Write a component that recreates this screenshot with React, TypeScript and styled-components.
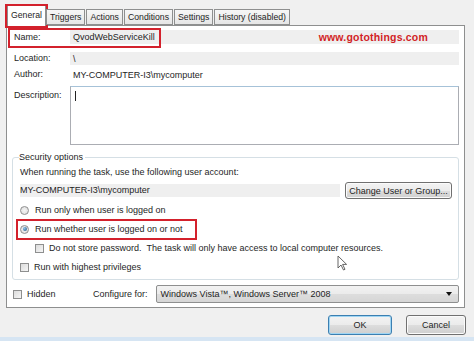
import styled, { createGlobalStyle } from "styled-components";

const GlobalStyle = createGlobalStyle`
  html, body {
    margin: 0;
    padding: 0;
    background: #f0f0f0;
  }
`;

const Window = styled.div`
  position: relative;
  width: 474px;
  height: 341px;
  box-sizing: border-box;
  background: #f0f0f0;
  border-bottom: 4px solid #d6e5f3;
  font-family: "Liberation Sans", Arial, sans-serif;
  font-size: 9px;
  color: #1e1e1e;
  display: flex;
  flex-direction: column;
  overflow: hidden;
`;

const TabBar = styled.div`
  display: flex;
  align-items: flex-end;
  height: 25px;
  padding-left: 7px;
  position: relative;
  z-index: 1;
`;

const Tab = styled.div<{ $active?: boolean }>`
  position: relative;
  box-sizing: border-box;
  height: ${(p) => (p.$active ? "21px" : "16px")};
  margin-bottom: ${(p) => (p.$active ? "-1px" : "0")};
  padding: ${(p) => (p.$active ? "4px 3px 0" : "2px 3px 0")};
  margin-right: ${(p) => (p.$active ? "0" : "1px")};
  border: 1px solid #8e8f8f;
  border-bottom: ${(p) => (p.$active ? "none" : "1px solid #8e8f8f")};
  background: ${(p) =>
    p.$active ? "#ffffff" : "linear-gradient(#f7f7f7, #e6e6e6)"};
  font-size: 8.7px;
  white-space: nowrap;
`;

const Highlight = styled.div<{ $l: number; $t: number; $w: number; $h: number }>`
  position: absolute;
  left: ${(p) => p.$l}px;
  top: ${(p) => p.$t}px;
  width: ${(p) => p.$w}px;
  height: ${(p) => p.$h}px;
  box-sizing: border-box;
  border: 2px solid #d3212c;
  pointer-events: none;
`;

const Panel = styled.div`
  box-sizing: border-box;
  margin-left: 6px;
  width: 459px;
  height: 283px;
  border: 1px solid #8e8f8f;
  background: #ffffff;
  padding: 4px 5px 0 7px;
  display: flex;
  flex-direction: column;
`;

const FieldRow = styled.div<{ $top?: number; $h: number }>`
  position: relative;
  display: grid;
  grid-template-columns: 56px 1fr;
  margin-top: ${(p) => p.$top ?? 0}px;
  height: ${(p) => p.$h}px;
`;

const Label = styled.div<{ $pad?: number }>`
  padding-top: ${(p) => p.$pad ?? 1}px;
  line-height: 12px;
`;

const ReadOnly = styled.div<{ $shade?: boolean }>`
  display: flex;
  align-items: center;
  justify-content: space-between;
  padding: 0 31px 0 3px;
  background: ${(p) => (p.$shade ? "#efefef" : "transparent")};
  line-height: 12px;
`;

const Brand = styled.span`
  color: #d21f26;
  font-weight: bold;
  font-size: 10.5px;
  letter-spacing: 0.2px;
`;

const TextArea = styled.div`
  box-sizing: border-box;
  border: 1px solid #abadb3;
  border-top-color: #a6c2d8;
  background: #fff;
  padding: 4px 4px;
`;

const Caret = styled.div`
  width: 1px;
  height: 10px;
  background: #222;
`;

const Group = styled.fieldset`
  margin: 6px 0 0 -2px;
  padding: 0 6px 6px 7px;
  height: 129px;
  box-sizing: border-box;
  border: 1px solid #d5dfe5;
  border-radius: 3px;
  min-width: 0;
`;

const Legend = styled.legend`
  padding: 0 2px 0 0;
  margin-left: -1px;
  line-height: 12px;
`;

const Line = styled.div<{ $top: number; $indent?: number }>`
  position: relative;
  display: flex;
  align-items: center;
  gap: 5px;
  height: 12px;
  margin-top: ${(p) => p.$top}px;
  margin-left: ${(p) => p.$indent ?? 0}px;
  white-space: nowrap;
`;

const AccountRow = styled.div`
  display: flex;
  align-items: center;
  justify-content: space-between;
  height: 17px;
  margin-top: 4px;
`;

const AccountField = styled.div`
  width: 320px;
  height: 13px;
  background: #efefef;
  line-height: 13px;
`;

const Button = styled.div<{ $w: number; $h: number; $default?: boolean }>`
  box-sizing: border-box;
  width: ${(p) => p.$w}px;
  height: ${(p) => p.$h}px;
  display: flex;
  align-items: center;
  justify-content: center;
  border: 1px solid ${(p) => (p.$default ? "#3c7fb1" : "#707070")};
  border-radius: 3px;
  background: linear-gradient(#f3f3f3 0%, #ebebeb 50%, #dddddd 51%, #cfcfcf 100%);
  box-shadow: inset 0 0 0 1px ${(p) => (p.$default ? "#9fd5f3" : "#fbfbfb")};
  font-size: 9px;
  color: #1e1e1e;
  white-space: nowrap;
`;

const Radio = styled.span<{ $on?: boolean }>`
  box-sizing: border-box;
  width: 9px;
  height: 9px;
  border-radius: 50%;
  border: 1px solid #8e8f8f;
  background: radial-gradient(circle, #f4f4f4 0%, #dcdcdc 100%);
  display: flex;
  align-items: center;
  justify-content: center;
  flex: none;
  margin-right: 1px;
  &::after {
    content: "";
    display: ${(p) => (p.$on ? "block" : "none")};
    width: 4px;
    height: 4px;
    border-radius: 50%;
    background: radial-gradient(circle at 35% 35%, #8fc4ea, #1d4f7e);
  }
`;

const Check = styled.span`
  box-sizing: border-box;
  width: 9px;
  height: 9px;
  border: 1px solid #8e8f8f;
  background: linear-gradient(135deg, #dcdcdc, #f6f6f6);
  flex: none;
`;

const BottomRow = styled.div`
  display: flex;
  align-items: center;
  height: 18px;
  margin: 5px 0 0 -1px;
`;

const HiddenBox = styled.div`
  display: flex;
  align-items: center;
  gap: 5px;
  width: 80px;
`;

const Select = styled.div`
  box-sizing: border-box;
  flex: 1;
  height: 18px;
  margin-left: 8px;
  border: 1px solid #8e8f8f;
  border-radius: 2px;
  background: linear-gradient(#f2f2f2 0%, #ebebeb 50%, #dddddd 51%, #d6d6d6 100%);
  display: flex;
  align-items: center;
  justify-content: space-between;
  padding: 0 6px 0 4px;
`;

const Arrow = styled.span`
  width: 0;
  height: 0;
  border-left: 3px solid transparent;
  border-right: 3px solid transparent;
  border-top: 4px solid #111;
`;

const Footer = styled.div`
  display: flex;
  justify-content: flex-end;
  gap: 14px;
  padding: 7px 8px 0 0;
`;

const Pointer = styled.svg`
  position: absolute;
  left: 337px;
  top: 255px;
`;

export default function App() {
  return (
    <>
      <GlobalStyle />
      <Window>
        <TabBar>
          <Tab $active>
            General
            <Highlight $l={-3} $t={-2} $w={43} $h={24} />
          </Tab>
          <Tab>Triggers</Tab>
          <Tab>Actions</Tab>
          <Tab>Conditions</Tab>
          <Tab>Settings</Tab>
          <Tab>History (disabled)</Tab>
        </TabBar>
        <Panel>
          <FieldRow $h={14}>
            <Label>Name:</Label>
            <ReadOnly $shade>
              <span>QvodWebServiceKill</span>
              <Brand>www.gotothings.com</Brand>
            </ReadOnly>
            <Highlight $l={-6} $t={-2} $w={153} $h={20} />
          </FieldRow>
          <FieldRow $top={8} $h={13}>
            <Label $pad={0}>Location:</Label>
            <ReadOnly $shade>\</ReadOnly>
          </FieldRow>
          <FieldRow $top={3} $h={13}>
            <Label $pad={0}>Author:</Label>
            <ReadOnly>MY-COMPUTER-I3\mycomputer</ReadOnly>
          </FieldRow>
          <FieldRow $top={5} $h={59}>
            <Label $pad={3}>Description:</Label>
            <TextArea>
              <Caret />
            </TextArea>
          </FieldRow>
          <Group>
            <Legend>Security options</Legend>
            <Line $top={3}>When running the task, use the following user account:</Line>
            <AccountRow>
              <AccountField>MY-COMPUTER-I3\mycomputer</AccountField>
              <Button $w={107} $h={17}>Change User or Group...</Button>
            </AccountRow>
            <Line $top={5}>
              <Radio />
              Run only when user is logged on
            </Line>
            <Line $top={7}>
              <Radio $on />
              Run whether user is logged on or not
              <Highlight $l={-4} $t={-4} $w={181} $h={21} />
            </Line>
            <Line $top={7} $indent={15}>
              <Check />
              Do not store password.&nbsp; The task will only have access to local computer resources.
            </Line>
            <Line $top={7}>
              <Check />
              Run with highest privileges
            </Line>
          </Group>
          <BottomRow>
            <HiddenBox>
              <Check />
              Hidden
            </HiddenBox>
            <span>Configure for:</span>
            <Select>
              <span>Windows Vista™, Windows Server™ 2008</span>
              <Arrow />
            </Select>
          </BottomRow>
        </Panel>
        <Footer>
          <Button $w={64} $h={20} $default>OK</Button>
          <Button $w={60} $h={20}>Cancel</Button>
        </Footer>
        <Pointer width="11" height="16" viewBox="0 0 11 16">
          <path
            d="M1 1 L1 13 L4 10 L6.5 15 L8 14.3 L5.6 9.4 L9.6 9.4 Z"
            fill="#ffffff"
            stroke="#555"
            strokeWidth="0.9"
            strokeLinejoin="round"
          />
        </Pointer>
      </Window>
    </>
  );
}
